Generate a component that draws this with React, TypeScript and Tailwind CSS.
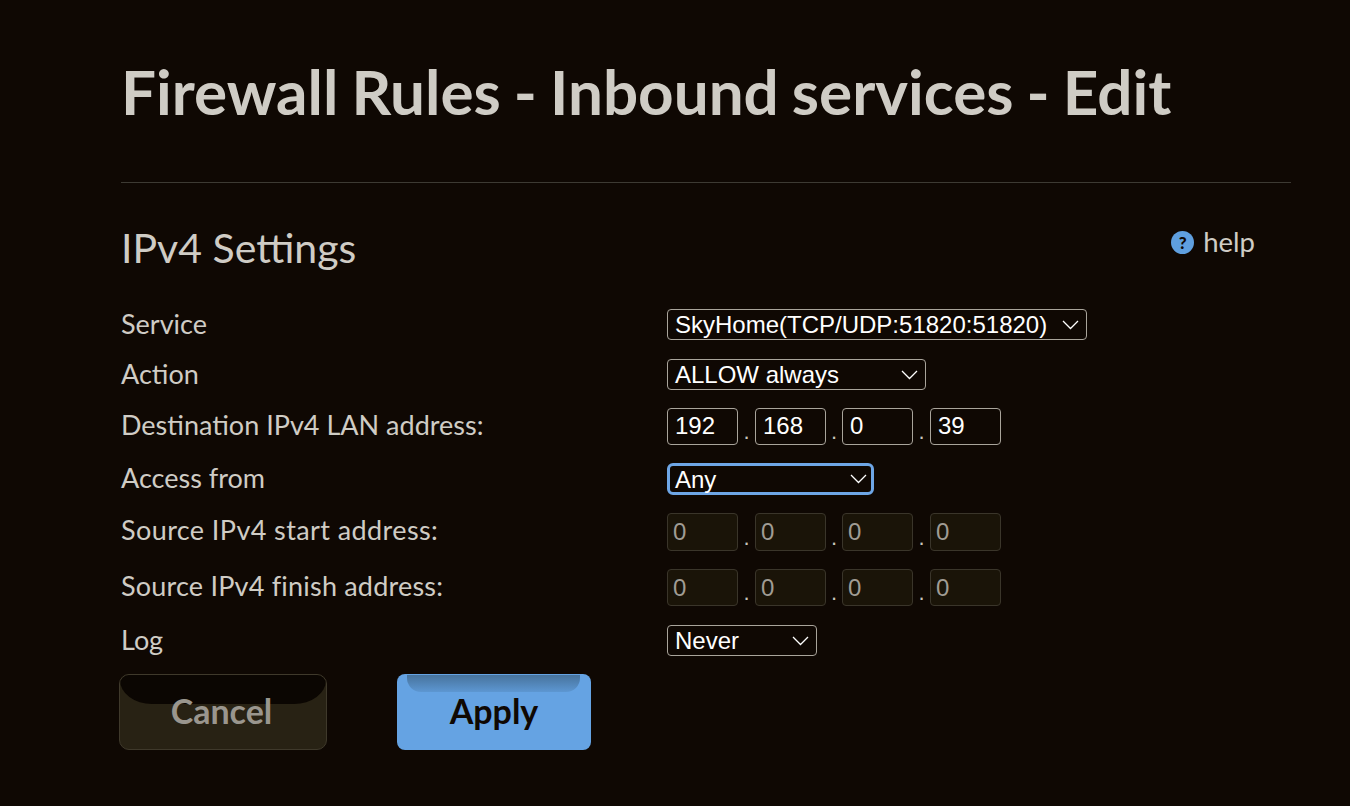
const sky = "font-['Lato','Noto_Sans',sans-serif]";
const arial = "font-['Liberation_Sans',Arial,sans-serif]";

function Chevron() {
  return (
    <svg width="17" height="10" viewBox="0 0 17 10" fill="none">
      <path d="M1 1l7.5 7.5L16 1" stroke="#fff" strokeWidth="1.3" />
    </svg>
  );
}

function Select({ value, width, focused }: { value: string; width: string; focused?: boolean }) {
  return (
    <div
      className={`flex items-center justify-between text-white text-[24px] leading-none ${arial} ${width} ${
        focused
          ? "h-[32px] rounded-[6px] border-[3px] border-[#6ea6e6] pl-[5px] pr-[4px]"
          : "h-[31px] rounded-[4px] border border-[#a9a49b] pl-[7px] pr-[7px]"
      }`}
    >
      <span className={focused ? "pt-[2px]" : ""}>{value}</span>
      <Chevron />
    </div>
  );
}

function IpBox({ value, disabled }: { value: string; disabled?: boolean }) {
  return (
    <input
      readOnly
      value={value}
      className={`w-[71px] h-full rounded-[4px] border text-[24px] ${arial} ${
        disabled
          ? "pl-[5px] border-[#3a352a] bg-[#1a1408] text-[#a09c94]"
          : "pl-[7px] pb-[2px] border-[#a9a49b] bg-transparent text-white"
      }`}
    />
  );
}

// the gaps between the boxes alternate by a pixel in the reference
const dotWidths = ["w-[17px]", "w-[16px]", "w-[17px]"];

function IpRow({ parts, disabled }: { parts: string[]; disabled?: boolean }) {
  return (
    <div className="flex h-full">
      {parts.map((p, i) => (
        <div key={i} className="flex h-full">
          {i > 0 && (
            <span className={`${dotWidths[i - 1]} self-end text-center text-[22px] leading-[26px] text-[#c9c5bc] ${arial}`}>.</span>
          )}
          <IpBox value={p} disabled={disabled} />
        </div>
      ))}
    </div>
  );
}

const rows = [
  { label: "Service", h: "h-[31px] mb-[19px]", text: "", control: <Select value="SkyHome(TCP/UDP:51820:51820)" width="w-[420px]" /> },
  { label: "Action", h: "h-[31px] mb-[18px]", text: "", control: <Select value="ALLOW always" width="w-[259px]" /> },
  { label: "Destination IPv4 LAN address:", h: "h-[37px] mb-[18px]", text: "pt-[2px]", control: <IpRow parts={["192", "168", "0", "39"]} /> },
  { label: "Access from", h: "h-[32px] mb-[18px]", text: "", control: <Select value="Any" width="w-[207px]" focused /> },
  { label: "Source IPv4 start address:", h: "h-[38px] mb-[18px]", text: "pt-[2px] tracking-[0.4px]", control: <IpRow parts={["0", "0", "0", "0"]} disabled /> },
  { label: "Source IPv4 finish address:", h: "h-[37px] mb-[19px]", text: "pt-[2px] tracking-[0.2px]", control: <IpRow parts={["0", "0", "0", "0"]} disabled /> },
  { label: "Log", h: "h-[31px] mb-[18px]", text: "", control: <Select value="Never" width="w-[150px]" /> },
];

export default function App() {
  return (
    <div className={`w-[1350px] h-[806px] overflow-hidden bg-[#0f0803] pl-[121px] ${sky}`}>
      <h1 className="h-[183px] pt-[53px] text-[62px] leading-[76px] font-bold [word-spacing:-2px] text-[#cfccc5] border-b border-[#3d3a33] w-[1170px] whitespace-nowrap">
        Firewall Rules - Inbound services - Edit
      </h1>

      <div className="flex justify-between w-[1134px] pt-[39px] h-[126px]">
        <h2 className="text-[41px] leading-[52px] font-normal text-[#cfccc5]">IPv4 Settings</h2>
        <div className="flex items-center gap-[9px] h-[40px] text-[27.5px] text-[#cfccc5]">
          <span className="flex items-center justify-center w-[23px] h-[23px] mt-px rounded-full bg-[#5f9fdf] text-[#0f0803] text-[17px] font-black">?</span>
          help
        </div>
      </div>

      <div>
        {rows.map((r) => (
          <div key={r.label} className={`flex ${r.h}`}>
            <div className={`w-[546px] text-[27px] leading-[30px] text-[#cfccc5] ${r.text}`}>{r.label}</div>
            {r.control}
          </div>
        ))}
      </div>

      <div className="flex gap-[70px]">
        <button className="relative w-[208px] h-[76px] -ml-[2px] pb-[4px] pr-[3px] overflow-hidden rounded-[10px] border border-[#3f392b] bg-[#282214] text-[34px] font-bold text-[#9a968e]">
          <span className="absolute left-0 right-0 top-0 h-[29px] rounded-b-[32px_24px] bg-[#0b0602]" />
          <span className="relative">Cancel</span>
        </button>
        <button className="relative w-[194px] h-[76px] pb-[4px] overflow-hidden rounded-[8px] bg-[#65a3e3] text-[34px] font-bold text-[#0f0803]">
          <span className="absolute left-[10px] right-[11px] top-px h-[17px] rounded-b-[14px] bg-gradient-to-b from-[#47739d] to-[#5d97d2]" />
          <span className="relative">Apply</span>
        </button>
      </div>
    </div>
  );
}
